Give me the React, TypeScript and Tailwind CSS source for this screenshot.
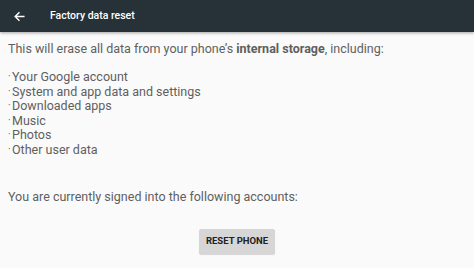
import React from "react";

export default function App() {
  const items = [
    "Your Google account",
    "System and app data and settings",
    "Downloaded apps",
    "Music",
    "Photos",
    "Other user data",
  ];
  return (
    <div className="w-[474px] h-[268px] bg-[#fafafa] overflow-hidden flex flex-col" style={{ fontFamily: "Roboto, 'Liberation Sans', sans-serif" }}>
      <div className="h-[32px] bg-[#263238] flex items-center shrink-0 shadow-[0_1px_3px_rgba(0,0,0,0.35)] relative z-10">
        <svg className="ml-[13px] w-[13px] h-[13px]" viewBox="0 0 24 24" fill="none">
          <path d="M20 12H5M11 5l-7 7 7 7" stroke="#ffffff" strokeWidth="2.6" strokeLinecap="square" />
        </svg>
        <span className="ml-[24px] text-white text-[10.5px] font-medium">Factory data reset</span>
      </div>
      <div className="px-[8px] text-[#5f5f5f] text-[12.5px]">
        <p className="mt-[9px] leading-[15px]">
          This will erase all data from your phone’s <span className="font-bold">internal storage</span>, including:
        </p>
        <div className="mt-[14px] leading-[14.5px]">
          {items.map((t) => (
            <div key={t} className="flex items-center">
              <span className="w-[3px] mr-[1px] text-[10px]">·</span>
              <span>{t}</span>
            </div>
          ))}
        </div>
        <p className="mt-[32px] leading-[15px]">You are currently signed into the following accounts:</p>
        <div className="flex justify-center mt-[25px]">
          <button className="w-[76px] h-[25px] bg-[#d6d6d6] rounded-[2px] shadow-[0_1px_1px_rgba(0,0,0,0.15)] text-[9.5px] font-bold text-[#222]">
            RESET PHONE
          </button>
        </div>
      </div>
    </div>
  );
}
